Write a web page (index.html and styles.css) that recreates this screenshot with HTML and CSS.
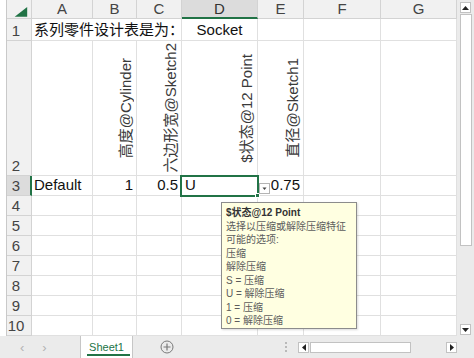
FILE: index.html
```html
<!DOCTYPE html>
<html lang="zh-CN">
<head>
  <meta charset="UTF-8">
  <title>Sheet1</title>
  <link rel="stylesheet" href="styles.css">
</head>
<body>
  <div class="window">
    <div class="edge"></div>

    <div class="sheet">
      <!-- header row -->
      <div class="corner">
        <svg width="25" height="19" viewBox="0 0 25 19"><polygon points="21,7 21,17 8,17" fill="#217346"/></svg>
      </div>
      <div class="colhead">A</div>
      <div class="colhead">B</div>
      <div class="colhead">C</div>
      <div class="colhead active">D</div>
      <div class="colhead">E</div>
      <div class="colhead">F</div>
      <div class="colhead">G</div>

      <!-- row 1 -->
      <div class="rowhead">1</div>
      <div class="cell span3">系列零件设计表是为：</div>
      <div class="cell center">Socket</div>
      <div class="cell"></div>
      <div class="cell"></div>
      <div class="cell"></div>

      <!-- row 2 -->
      <div class="rowhead">2</div>
      <div class="cell"></div>
      <div class="cell vert"><span>高度@Cylinder</span></div>
      <div class="cell vert"><span>六边形宽@Sketch2</span></div>
      <div class="cell vert"><span>$状态@12 Point</span></div>
      <div class="cell vert"><span>直径@Sketch1</span></div>
      <div class="cell"></div>
      <div class="cell"></div>

      <!-- row 3 -->
      <div class="rowhead active">3</div>
      <div class="cell">Default</div>
      <div class="cell num">1</div>
      <div class="cell num">0.5</div>
      <div class="cell selected">U</div>
      <div class="cell num">0.75</div>
      <div class="cell"></div>
      <div class="cell"></div>

      <div class="rowhead">4</div><div class="cell"></div><div class="cell"></div><div class="cell"></div><div class="cell"></div><div class="cell"></div><div class="cell"></div><div class="cell"></div>
      <div class="rowhead">5</div><div class="cell"></div><div class="cell"></div><div class="cell"></div><div class="cell"></div><div class="cell"></div><div class="cell"></div><div class="cell"></div>
      <div class="rowhead">6</div><div class="cell"></div><div class="cell"></div><div class="cell"></div><div class="cell"></div><div class="cell"></div><div class="cell"></div><div class="cell"></div>
      <div class="rowhead">7</div><div class="cell"></div><div class="cell"></div><div class="cell"></div><div class="cell"></div><div class="cell"></div><div class="cell"></div><div class="cell"></div>
      <div class="rowhead">8</div><div class="cell"></div><div class="cell"></div><div class="cell"></div><div class="cell"></div><div class="cell"></div><div class="cell"></div><div class="cell"></div>
      <div class="rowhead">9</div><div class="cell"></div><div class="cell"></div><div class="cell"></div><div class="cell"></div><div class="cell"></div><div class="cell"></div><div class="cell"></div>
      <div class="rowhead">10</div><div class="cell"></div><div class="cell"></div><div class="cell"></div><div class="cell"></div><div class="cell"></div><div class="cell"></div><div class="cell"></div>

      <!-- overlays -->
      <div class="fill-handle"></div>
      <div class="dropdown">
        <svg width="9" height="9" viewBox="0 0 9 9"><polygon points="2.5,3.5 6.5,3.5 4.5,6" fill="#444"/></svg>
      </div>
      <div class="tooltip">
        <p class="tip-title">$状态@12 Point</p>
        <p>选择以压缩或解除压缩特征</p>
        <p>可能的选项:</p>
        <p>压缩</p>
        <p>解除压缩</p>
        <p>S = 压缩</p>
        <p>U = 解除压缩</p>
        <p>1 = 压缩</p>
        <p>0 = 解除压缩</p>
      </div>
    </div>

    <div class="vscroll">
      <div class="sb-btn">
        <svg width="7" height="4" viewBox="0 0 7 4"><polygon points="0,4 7,4 3.5,0" fill="#222"/></svg>
      </div>
      <div class="vthumb"></div>
      <div class="sb-track"></div>
      <div class="sb-btn">
        <svg width="7" height="4" viewBox="0 0 7 4"><polygon points="0,0 7,0 3.5,4" fill="#222"/></svg>
      </div>
    </div>

    <div class="tabbar">
      <div class="nav"><span>‹</span><span>›</span></div>
      <div class="tab">Sheet1</div>
      <div class="add">
        <svg width="14" height="14" viewBox="0 0 14 14">
          <circle cx="7" cy="7" r="6" fill="none" stroke="#7a7a7a" stroke-width="1"/>
          <path d="M7 3.5v7M3.5 7h7" stroke="#7a7a7a" stroke-width="1.2"/>
        </svg>
      </div>
      <div class="spacer"></div>
      <div class="split">
        <svg width="4" height="12" viewBox="0 0 4 12"><circle cx="2" cy="2" r="1" fill="#a8a8a8"/><circle cx="2" cy="6" r="1" fill="#a8a8a8"/><circle cx="2" cy="10" r="1" fill="#a8a8a8"/></svg>
      </div>
      <div class="hscroll">
        <div class="sb-btn">
          <svg width="4" height="7" viewBox="0 0 4 7"><polygon points="4,0 4,7 0,3.5" fill="#222"/></svg>
        </div>
        <div class="hthumb"></div>
        <div class="sb-track"></div>
        <div class="sb-btn">
          <svg width="4" height="7" viewBox="0 0 4 7"><polygon points="0,0 0,7 4,3.5" fill="#222"/></svg>
        </div>
      </div>
      <div class="sb-corner"></div>
    </div>
  </div>
</body>
</html>
```

FILE: styles.css
```css
:root {
  --excel-green: #217346;
  --grid-line: #e0e0e0;
  --head-bg: #f1f1f1;
  --head-line: #d3d3d3;
  --head-active: #dcdcdc;
  --bar-bg: #ebebeb;
}

* {
  box-sizing: border-box;
  margin: 0;
  padding: 0;
}

body {
  font-family: "Liberation Sans", "Noto Sans CJK SC", sans-serif;
  font-size: 15px;
  color: #111;
  background: #fff;
  width: 474px;
  height: 358px;
  overflow: hidden;
}

.window {
  display: grid;
  grid-template-columns: 7px 450px 17px;
  grid-template-rows: 336px 22px;
  height: 358px;
}

.edge {
  border-right: 1px solid #c9c9c9;
}

/* sheet grid */
.sheet {
  position: relative;
  display: grid;
  grid-template-columns: 25px 61px 44px 45px 76px 46px 77px 76px;
  grid-template-rows: 19px 22px 135px 20px repeat(7, 20px);
}

.corner,
.colhead,
.rowhead,
.cell {
  display: flex;
  white-space: nowrap;
  line-height: 18px;
  border-right: 1px solid var(--grid-line);
  border-bottom: 1px solid var(--grid-line);
}

.corner {
  background: var(--head-bg);
  border-color: var(--head-line);
}

.colhead {
  background: var(--head-bg);
  border-color: var(--head-line);
  color: #444;
  align-items: center;
  justify-content: center;
}

.colhead.active {
  background: var(--head-active);
  border-bottom: 2px solid var(--excel-green);
  color: #333;
}

.rowhead {
  background: var(--head-bg);
  border-color: var(--head-line);
  color: #444;
  align-items: flex-end;
  justify-content: center;
  padding-right: 6px;
}

.rowhead.active {
  background: var(--head-active);
  border-right: 2px solid var(--excel-green);
  padding-right: 5px;
}

.cell {
  align-items: flex-end;
  padding: 0 2px 1px;
}

.span3 {
  grid-column: span 3;
}

.center {
  justify-content: center;
}

.num {
  justify-content: flex-end;
  padding-right: 3px;
}

.vert {
  align-items: center;
  justify-content: flex-end;
  padding: 0 1px 0 0;
  color: #3a3a3a;
}

.vert span {
  writing-mode: vertical-rl;
  text-orientation: sideways;
  transform: rotate(180deg);
  line-height: 18px;
}

.selected {
  position: relative;
  z-index: 2;
  padding-left: 3px;
}

.selected::after {
  content: "";
  position: absolute;
  top: -1px;
  left: -2px;
  right: -2px;
  bottom: -2px;
  border: 2px solid var(--excel-green);
}

.fill-handle {
  position: absolute;
  left: 248px;
  top: 193px;
  width: 5px;
  height: 5px;
  background: var(--excel-green);
  border: 1px solid #fff;
  z-index: 3;
}

.dropdown {
  position: absolute;
  left: 252px;
  top: 183px;
  width: 11px;
  height: 11px;
  background: #fff;
  border: 1px solid #b4b4b4;
  display: flex;
  align-items: center;
  justify-content: center;
  z-index: 3;
}

.tooltip {
  position: absolute;
  left: 214px;
  top: 202px;
  width: 136px;
  height: 127px;
  background: #ffffe1;
  border: 1px solid #8c8c8c;
  box-shadow: 1px 1px 2px rgba(0, 0, 0, 0.15);
  padding: 3px 4px 2px;
  font-size: 10px;
  line-height: 13.5px;
  color: #5c5c5c;
  z-index: 4;
}

.tip-title {
  font-weight: bold;
  color: #333;
}

/* scrollbars */
.vscroll {
  background: var(--bar-bg);
  display: flex;
  flex-direction: column;
  padding: 2px 2px 1px 3px;
  gap: 1px;
}

.sb-btn {
  flex: none;
  width: 11px;
  height: 11px;
  background: #fff;
  border: 1px solid #c2c2c2;
  display: flex;
  align-items: center;
  justify-content: center;
}

.vthumb {
  height: 232px;
  background: #fff;
  border: 1px solid #c2c2c2;
}

.sb-track {
  flex: 1;
}

/* sheet tabs */
.tabbar {
  grid-column: 1 / -1;
  display: flex;
  align-items: stretch;
  background: var(--bar-bg);
  font-size: 11px;
}

.nav {
  width: 80px;
  display: flex;
  align-items: center;
  gap: 18px;
  padding-left: 20px;
  color: #b3b3b3;
  font-size: 13px;
}

.tab {
  width: 53px;
  background: #fff;
  border-left: 1px solid #c6c6c6;
  border-right: 1px solid #c6c6c6;
  color: var(--excel-green);
  display: flex;
  align-items: center;
  justify-content: center;
  position: relative;
}

.tab::after {
  content: "";
  position: absolute;
  left: 6px;
  right: 2px;
  bottom: 2px;
  height: 2px;
  background: var(--excel-green);
}

.add {
  width: 68px;
  display: flex;
  align-items: center;
  justify-content: center;
}

.spacer {
  flex: 1;
}

.split {
  width: 15px;
  display: flex;
  align-items: center;
  padding-left: 1px;
}

.hscroll {
  width: 159px;
  display: flex;
  align-items: center;
  gap: 1px;
}

.hthumb {
  width: 101px;
  height: 11px;
  background: #fff;
  border: 1px solid #c2c2c2;
}

.sb-corner {
  width: 17px;
}
```
